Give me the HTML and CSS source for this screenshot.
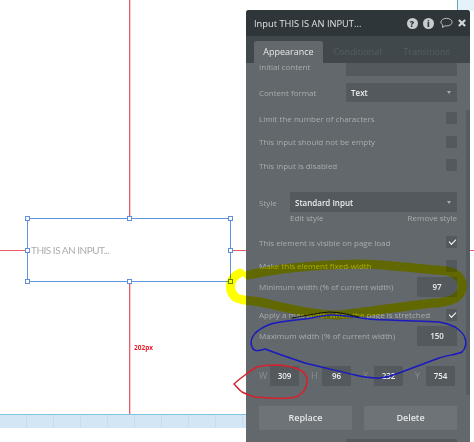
FILE: index.html
```html
<!DOCTYPE html>
<html lang="en">
<head>
    <meta charset="UTF-8">
    <meta name="viewport" content="width=device-width, initial-scale=1.0">
    <title>Input property editor</title>
    <link rel="stylesheet" href="styles.css">
</head>
<body>
    <div class="canvas">
        <!-- page guides -->
        <div class="guide guide-top"></div>
        <div class="guide guide-bottom"></div>
        <div class="guide guide-left"></div>
        <div class="guide guide-right"></div>
        <div class="guide guide-far"></div>
        <div class="guide-label">202px</div>
        <div class="top-line"></div>
        <div class="ruler"></div>

        <!-- selected element -->
        <div class="selected">
            THIS IS AN INPUT...
            <i class="handle h-tl"></i><i class="handle h-tc"></i><i class="handle h-tr"></i>
            <i class="handle h-ml"></i><i class="handle h-mr"></i>
            <i class="handle h-bl"></i><i class="handle h-bc"></i><i class="handle h-br"></i>
        </div>

        <!-- property editor -->
        <div class="panel">
            <div class="panel-head">
                <span class="panel-title">Input THIS IS AN INPUT...</span>
                <div class="head-icons">
                    <span class="round-icon">?</span>
                    <span class="round-icon">i</span>
                    <svg width="13" height="12" viewBox="0 0 14 12"><path d="M7 1C3.5 1 1 2.800 1 5.100c0 1.300.8 2.400 2 3.100L2.600 10.800 5.600 9C6 9.100 6.500 9.200 7 9.200c3.500 0 6-1.800 6-4.100S10.500 1 7 1z" fill="none" stroke="#c4c8ca" stroke-width="1"/></svg>
                    <svg width="8" height="8" viewBox="0 0 9 9"><path d="M1 1l7 7M8 1L1 8" stroke="#d4d7d8" stroke-width="2.400"/></svg>
                </div>
            </div>
            <div class="tabs">
                <div class="tab active">Appearance</div>
                <div class="tab">Conditional</div>
                <div class="tab">Transitions</div>
            </div>
            <div class="panel-body">
                <div class="row row-clip">
                    <span>Initial content</span>
                    <div class="field field-wide"></div>
                </div>
                <div class="row row-format">
                    <span>Content format</span>
                    <div class="field field-wide select">Text<b class="caret"></b></div>
                </div>
                <div class="row row-check"><span>Limit the number of characters</span><i class="check"></i></div>
                <div class="row row-check"><span>This input should not be empty</span><i class="check"></i></div>
                <div class="row row-check"><span>This input is disabled</span><i class="check"></i></div>
                <div class="row row-style">
                    <span>Style</span>
                    <div class="field field-style select">Standard Input<b class="caret"></b></div>
                </div>
                <div class="style-links"><span>Edit style</span><span>Remove style</span></div>
                <div class="row row-check"><span>This element is visible on page load</span><i class="check on"></i></div>
                <div class="row row-check row-tight"><span>Make this element fixed-width</span><i class="check"></i></div>
                <div class="row row-num"><span>Minimum width (% of current width)</span><div class="field field-num">97</div></div>
                <div class="row row-check row-tight"><span>Apply a max width when the page is stretched</span><i class="check on"></i></div>
                <div class="row row-num"><span>Maximum width (% of current width)</span><div class="field field-num">150</div></div>
                <div class="coords">
                    <span>W</span><div class="field">309</div>
                    <span>H</span><div class="field">96</div>
                    <span>X</span><div class="field">232</div>
                    <span>Y</span><div class="field">754</div>
                </div>
                <div class="actions">
                    <div class="action">Replace</div>
                    <div class="action">Delete</div>
                </div>
                <div class="next-field"></div>
            </div>
            <div class="scrollbar"></div>
        </div>

        <!-- hand drawn marks -->
        <svg class="marks" width="474" height="442" viewBox="0 0 474 442">
            <path class="mark-yellow" d="M248 275C270 270 310 265 355 264C390 264 425 270 447 271C458 273 463 280 462 288C461 298 450 302 435 303C410 305 370 312 339 315C315 315 285 308 265 303C250 300 240 301 235 297C228 290 229 278 240 273" />
            <path class="mark-blue" d="M265 349C258 351 254 352 252 347C249 340 254 333 259 330C265 326 270 324 275 323C285 321 295 320 305 319C315 318 322 315 332 315C340 315 347 316 355 317C365 319 377 320 389 320C405 321 425 321 439 322C447 323 451 325 455 327C461 331 464 334 465 338C467 344 466 348 462 352C456 355 447 355 439 358C426 363 412 368 399 373C391 376 383 379 375 378C368 378 362 377 355 375C339 371 320 367 305 363C290 358 278 354 265 349" />
            <path class="mark-black" d="M292 318C305 316 317 313 329 312C340 312 350 315 359 317" />
            <path class="mark-red" d="M257 367C264 365 272 365 279 365C288 366 295 367 300 370C305 373 307 376 307 380C307 386 305 390 302 393C298 397 294 398 289 398C278 399 265 398 255 397C250 396 246 394 242 392C238 389 236 386 234 384C237 381 241 378 245 375C249 372 253 369 257 367" />
        </svg>
    </div>
</body>
</html>
```

FILE: styles.css
```css
*{
    margin: 0;
    padding: 0;
    box-sizing: border-box;
}
body{
    overflow: hidden;
    background: #fff;
    font-family: "Open Sans", sans-serif;
}
.canvas{
    position: relative;
    width: 474px;
    height: 442px;
    overflow: hidden;
}
.guide{
    position: absolute;
    background: #ec5a63;
}
.guide-top{
    left: 129px;
    top: 0;
    width: 1px;
    height: 218px;
    box-shadow: 1px 0 0 #f9c9cc;
}
.guide-bottom{
    left: 129px;
    top: 282px;
    width: 1px;
    height: 133px;
    box-shadow: 1px 0 0 #f9c9cc;
}
.guide-left{
    left: 0;
    top: 250px;
    width: 27px;
    height: 1px;
}
.guide-right{
    left: 232px;
    top: 250px;
    width: 15px;
    height: 1px;
}
.guide-far{
    left: 470px;
    top: 250px;
    width: 4px;
    height: 1px;
}
.guide-label{
    position: absolute;
    left: 134px;
    top: 343px;
    font-size: 6.5px;
    font-weight: 700;
    color: #e8202c;
}
.top-line{
    position: absolute;
    left: 457px;
    top: 0;
    width: 17px;
    height: 11px;
    background: #e6f2f9;
    border-left: 1px solid #5fa9bd;
}
.ruler{
    position: absolute;
    left: 0;
    top: 414px;
    width: 250px;
    height: 14px;
    background: repeating-linear-gradient(90deg, #d3e6f5 0, #d3e6f5 26px, #c8dcec 26px, #c8dcec 27px);
    border-top: 1px solid #7cc3dc;
}
.selected{
    position: absolute;
    left: 27px;
    top: 218px;
    width: 204px;
    height: 64px;
    border: 1px solid #5f95dc;
    display: flex;
    align-items: center;
    padding-left: 3px;
    font-family: Lato, sans-serif;
    font-size: 10px;
    letter-spacing: -0.5px;
    color: #adadad;
    white-space: nowrap;
}
.handle{
    position: absolute;
    width: 5px;
    height: 5px;
    background: #fff;
    border: 1px solid #5f8fd8;
}
.h-tl{ left: -3px; top: -3px; }
.h-tc{ left: 99px; top: -3px; }
.h-tr{ right: -3px; top: -3px; }
.h-ml{ left: -3px; top: 29px; }
.h-mr{ right: -3px; top: 29px; }
.h-bl{ left: -3px; bottom: -3px; }
.h-bc{ left: 99px; bottom: -3px; }
.h-br{ right: -3px; bottom: -3px; }

.panel{
    position: absolute;
    left: 246px;
    top: 10px;
    width: 224px;
    height: 440px;
    background: #62686b;
    border-radius: 3px 3px 0 0;
    color: #a9adaf;
    font-size: 8px;
}
.panel-head{
    height: 26px;
    background: #2e3639;
    border-radius: 3px 3px 0 0;
    display: flex;
    align-items: center;
    justify-content: space-between;
    padding: 0 4px 0 8px;
}
.panel-title{
    color: #dfe2e3;
    font-size: 9.3px;
}
.head-icons{
    display: flex;
    align-items: center;
    gap: 5.5px;
}
.round-icon{
    width: 11px;
    height: 11px;
    border-radius: 50%;
    background: #c9cccd;
    color: #2e3639;
    font-size: 8.5px;
    font-weight: 800;
    line-height: 11px;
    text-align: center;
}
.tabs{
    height: 27px;
    background: #40484b;
    display: flex;
    align-items: flex-end;
    padding-left: 8px;
}
.tab{
    width: 69px;
    height: 22px;
    line-height: 22px;
    text-align: center;
    font-size: 9px;
    color: #565d60;
}
.tab.active{
    background: #62686b;
    color: #e6e8e9;
    border-radius: 3px 3px 0 0;
}
.panel-body{
    padding: 0 13px;
}
.row{
    display: flex;
    align-items: center;
    justify-content: space-between;
}
.row-clip{
    height: 13px;
    margin-bottom: 7px;
    align-items: flex-start;
}
.row-clip span{
    line-height: 8px;
}
.row-format{
    height: 19px;
    margin-bottom: 10px;
}
.row-check{
    height: 12px;
    margin-bottom: 11.5px;
}
.row-check:nth-child(5){
    margin-bottom: 21px;
}
.row-style{
    height: 20px;
}
.row-tight{
    margin-bottom: 5px;
}
.field{
    background: #53595c;
    color: #eceeee;
    display: flex;
    align-items: center;
    justify-content: center;
    height: 20px;
}
.field-wide{
    width: 111px;
    height: 100%;
}
.field-style{
    width: 167px;
}
.select{
    justify-content: space-between;
    padding: 0 6px 0 5px;
    font-weight: 600;
}
.caret{
    border-left: 2.5px solid transparent;
    border-right: 2.5px solid transparent;
    border-top: 3px solid #a9adaf;
}
.check{
    width: 11px;
    height: 12px;
    background: #53595c;
    position: relative;
}
.check.on::after{
    content: "";
    position: absolute;
    left: 3px;
    top: 3px;
    width: 6px;
    height: 3px;
    border-left: 1.5px solid #fff;
    border-bottom: 1.5px solid #fff;
    transform: rotate(-45deg);
}
.style-links{
    display: flex;
    justify-content: space-between;
    padding-left: 31px;
    height: 12px;
    line-height: 12px;
    margin-bottom: 12px;
}
.row-num{
    height: 20px;
    margin-bottom: 12px;
}
.field-num{
    width: 40px;
    font-weight: 600;
}
.coords{
    display: flex;
    align-items: center;
    margin-top: 20px;
}
.coords span{
    width: 11px;
    font-size: 9px;
    color: #8a8f92;
}
.coords .field{
    width: 29px;
    margin-right: 12px;
    font-weight: 600;
}
.coords .field:last-child{
    margin-right: 0;
}
.actions{
    display: flex;
    justify-content: space-between;
    margin-top: 20px;
}
.action{
    width: 93px;
    height: 24px;
    background: #6d7376;
    color: #e4e6e7;
    font-size: 9px;
    font-weight: 600;
    line-height: 24px;
    text-align: center;
}
.next-field{
    width: 111px;
    height: 20px;
    margin: 9px 0 0 87px;
    background: #53595c;
}
.scrollbar{
    position: absolute;
    right: 0;
    top: 100px;
    width: 4px;
    height: 285px;
    background: #565c5f;
}
.marks{
    position: absolute;
    left: 0;
    top: 0;
    fill: none;
    stroke-linecap: round;
    stroke-linejoin: round;
}
.mark-yellow{
    stroke: #ffff00;
    stroke-width: 9px;
    mix-blend-mode: multiply;
}
.mark-blue{
    stroke: #1a1ac0;
    stroke-width: 1.5px;
}
.mark-black{
    stroke: #111;
    stroke-width: 1px;
}
.mark-red{
    stroke: #d8202c;
    stroke-width: 1.5px;
}
```
